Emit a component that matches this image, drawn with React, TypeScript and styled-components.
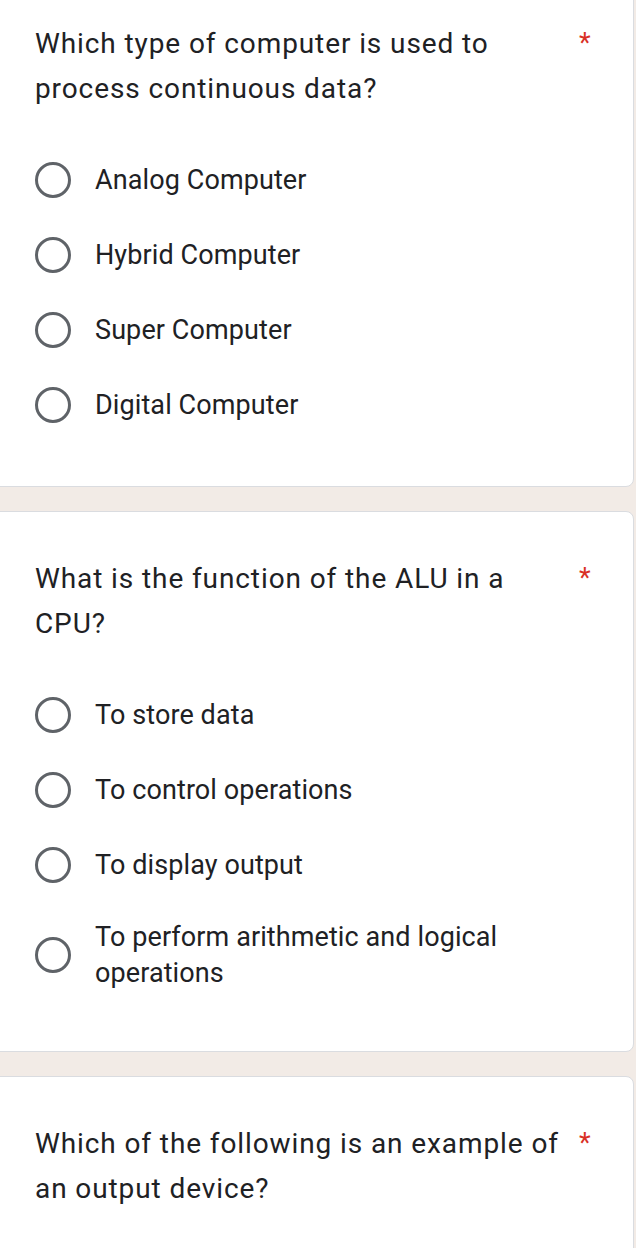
import React from "react";
import styled, { createGlobalStyle } from "styled-components";

const Global = createGlobalStyle`
  html, body {
    margin: 0;
    padding: 0;
    background: #f2ebe6;
    overflow: hidden;
  }
  body {
    font-family: Roboto, "Noto Sans", Arial, sans-serif;
    color: #202124;
  }
`;

const Page = styled.div`
  display: flex;
  flex-direction: column;
  gap: 24px;
  margin: -24px 2px 0 -12px;
`;

const Card = styled.section<{ $minHeight?: number }>`
  background: #ffffff;
  border: 1px solid #dadce0;
  border-radius: 8px;
  padding: 44px 0 53px 46px;
  display: flex;
  flex-direction: column;
  gap: 41px;
  min-height: ${(p) => (p.$minHeight ? `${p.$minHeight}px` : "auto")};
  box-sizing: border-box;
`;

const QuestionRow = styled.div`
  display: flex;
  align-items: flex-start;
`;

const QuestionText = styled.div`
  width: 528px;
  font-size: 28px;
  line-height: 45px;
  letter-spacing: 0.9px;
`;

const Required = styled.span`
  color: #d93025;
  font-size: 27px;
  line-height: 45px;
  margin-left: 16px;
`;

const Options = styled.div`
  display: flex;
  flex-direction: column;
  gap: 19px;
`;

const Option = styled.label`
  display: flex;
  align-items: center;
  gap: 24px;
  min-height: 56px;
  padding: 7px 0;
  box-sizing: border-box;
`;

const Radio = styled.span`
  flex: none;
  width: 36px;
  height: 36px;
  border-radius: 50%;
  border: 3px solid #5f6368;
  box-sizing: border-box;
`;

const OptionText = styled.span`
  font-size: 27px;
  line-height: 36px;
  width: 440px;
  letter-spacing: 0.1px;
`;

type Q = { title: string; options: string[] };

const questions: Q[] = [
  {
    title: "Which type of computer is used to process continuous data?",
    options: ["Analog Computer", "Hybrid Computer", "Super Computer", "Digital Computer"],
  },
  {
    title: "What is the function of the ALU in a CPU?",
    options: [
      "To store data",
      "To control operations",
      "To display output",
      "To perform arithmetic and logical operations",
    ],
  },
];

export default function App() {
  return (
    <>
      <Global />
      <Page>
        {questions.map((q) => (
          <Card key={q.title}>
            <QuestionRow>
              <QuestionText>{q.title}</QuestionText>
              <Required>*</Required>
            </QuestionRow>
            <Options>
              {q.options.map((o) => (
                <Option key={o}>
                  <Radio />
                  <OptionText>{o}</OptionText>
                </Option>
              ))}
            </Options>
          </Card>
        ))}
        <Card $minHeight={400}>
          <QuestionRow>
            <QuestionText>Which of the following is an example of an output device?</QuestionText>
            <Required>*</Required>
          </QuestionRow>
        </Card>
      </Page>
    </>
  );
}
